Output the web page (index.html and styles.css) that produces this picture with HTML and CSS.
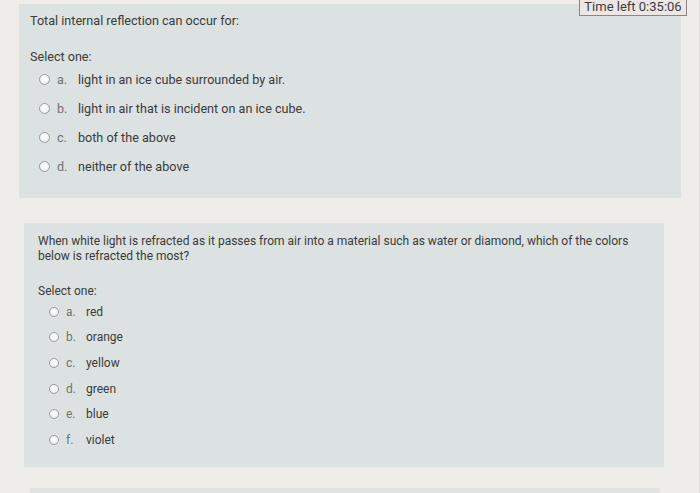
FILE: index.html
```html
<!DOCTYPE html>
<html>
<head>
<meta charset="utf-8">
<link rel="stylesheet" href="styles.css">
</head>
<body>
<div class="page">
  <div class="timer">Time left 0:35:06</div>
  <div class="card card-one">
    <div class="qtext">Total internal reflection can occur for:</div>
    <div class="select">Select one:</div>
    <div class="options">
      <div class="opt"><span class="radio"></span><span class="letter">a.</span><span class="label">light in an ice cube surrounded by air.</span></div>
      <div class="opt"><span class="radio"></span><span class="letter">b.</span><span class="label">light in air that is incident on an ice cube.</span></div>
      <div class="opt"><span class="radio"></span><span class="letter">c.</span><span class="label">both of the above</span></div>
      <div class="opt"><span class="radio"></span><span class="letter">d.</span><span class="label">neither of the above</span></div>
    </div>
  </div>
  <div class="card card-two">
    <div class="qtext">When white light is refracted as it passes from air into a material such as water or diamond, which of the colors below is refracted the most?</div>
    <div class="select">Select one:</div>
    <div class="options">
      <div class="opt"><span class="radio"></span><span class="letter">a.</span><span class="label">red</span></div>
      <div class="opt"><span class="radio"></span><span class="letter">b.</span><span class="label">orange</span></div>
      <div class="opt"><span class="radio"></span><span class="letter">c.</span><span class="label">yellow</span></div>
      <div class="opt"><span class="radio"></span><span class="letter">d.</span><span class="label">green</span></div>
      <div class="opt"><span class="radio"></span><span class="letter">e.</span><span class="label">blue</span></div>
      <div class="opt"><span class="radio"></span><span class="letter">f.</span><span class="label">violet</span></div>
    </div>
  </div>
  <div class="card card-three"></div>
</div>
</body>
</html>
```

FILE: styles.css
```css
html, body {
  margin: 0;
  padding: 0;
  background: #eeede9;
  font-family: Roboto, "Liberation Sans", Arial, sans-serif;
  color: #3b3b3b;
  overflow: hidden;
}

.page {
  position: relative;
  width: 700px;
  height: 493px;
  padding-top: 4px;
  box-sizing: border-box;
  border-right: 1px solid #dcdad5;
}

.timer {
  position: absolute;
  top: -1px;
  left: 579px;
  width: 108px;
  height: 17px;
  box-sizing: border-box;
  border: 1px solid #8f8585;
  background: #ede6e5;
  color: #3c3c3e;
  font-size: 13px;
  line-height: 14px;
  text-align: center;
  z-index: 2;
}

.card {
  background: #dce2e1;
  box-sizing: border-box;
}

.card-one {
  margin-left: 19px;
  width: 662px;
  height: 194px;
  padding: 8px 0 0 11px;
  font-size: 12.6px;
}

.card-one .qtext {
  line-height: 18px;
}

.card-one .select {
  margin-top: 18px;
  line-height: 18px;
}

.card-one .opt {
  height: 29px;
  display: flex;
  align-items: center;
  padding-left: 9px;
}

.card-one .options {
  margin-top: -1px;
}

.card-one .radio {
  width: 11px;
  height: 11px;
}

.card-one .letter {
  width: 21px;
  margin-left: 7px;
}

.card-two {
  margin-top: 25px;
  margin-left: 24px;
  width: 640px;
  height: 244px;
  padding: 11px 0 0 14px;
  font-size: 12px;
}

.card-two .qtext {
  line-height: 15px;
  width: 596px;
}

.card-two .select {
  margin-top: 19px;
  line-height: 16px;
}

.card-two .opt {
  height: 25.6px;
  display: flex;
  align-items: center;
  padding-left: 11px;
}

.card-two .options {
  margin-top: 0;
}

.card-two .radio {
  width: 10px;
  height: 10px;
}

.card-two .letter {
  width: 20px;
  margin-left: 7px;
}

.radio {
  display: inline-block;
  flex: none;
  border-radius: 50%;
  border: 1px solid #9a9c9c;
  background: radial-gradient(circle at 50% 35%, #ffffff 0%, #f3f4f4 60%, #dfe1e1 100%);
  box-sizing: border-box;
}

.letter {
  color: #6f7373;
}

.label {
  color: #3b3b3b;
}

.card-three {
  margin-top: 21px;
  margin-left: 30px;
  width: 630px;
  height: 20px;
  background: #dfe3e2;
}
```
